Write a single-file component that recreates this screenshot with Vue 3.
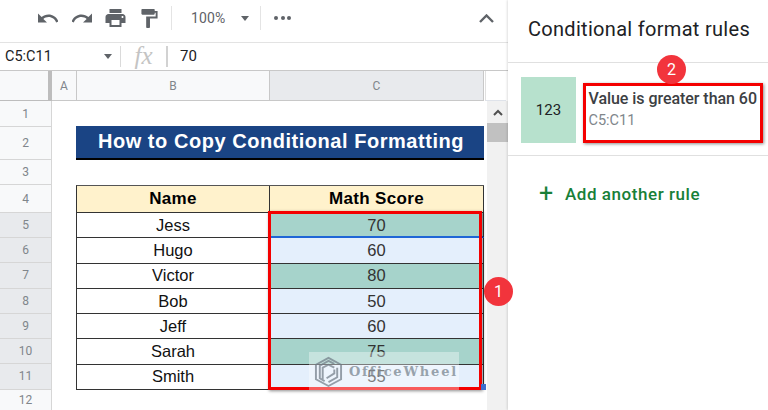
<script setup>
const rowH = [26, 33, 25, 28, 25, 25, 25.5, 25, 25, 25, 26, 21]
const sheetRows = [
  { name: 'Jess', score: 70, pass: true },
  { name: 'Hugo', score: 60, pass: false },
  { name: 'Victor', score: 80, pass: true },
  { name: 'Bob', score: 50, pass: false },
  { name: 'Jeff', score: 60, pass: false },
  { name: 'Sarah', score: 75, pass: true },
  { name: 'Smith', score: 55, pass: false }
]
</script>

<template>
  <div class="app">
    <div class="main">
      <div class="toolbar">
        <svg class="ic undo" viewBox="2 7 20 10"><path d="M12.5 8c-2.65 0-5.05.99-6.9 2.6L2 7v9h9l-3.62-3.62c1.39-1.16 3.16-1.88 5.12-1.88 3.54 0 6.55 2.31 7.6 5.5l2.37-.78C21.08 11.03 17.15 8 12.5 8z"/></svg>
        <svg class="ic redo" viewBox="2 7 20 10"><path d="M18.4 10.6C16.55 8.99 14.15 8 11.5 8c-4.65 0-8.58 3.03-9.96 7.22L3.9 16c1.05-3.19 4.05-5.5 7.6-5.5 1.95 0 3.73.72 5.12 1.88L13 16h9V7l-3.6 3.6z"/></svg>
        <svg class="ic print" viewBox="2 3 20 18"><path d="M19 8H5c-1.66 0-3 1.34-3 3v6h4v4h12v-4h4v-6c0-1.66-1.34-3-3-3zm-3 11H8v-5h8v5zm3-7c-.55 0-1-.45-1-1s.45-1 1-1 1 .45 1 1-.45 1-1 1zm-1-9H6v4h12V3z"/></svg>
        <svg class="ic paint" viewBox="4 2 17 20"><path d="M18 4V3c0-.55-.45-1-1-1H5c-.55 0-1 .45-1 1v4c0 .55.45 1 1 1h12c.55 0 1-.45 1-1V6h1v4H9v11c0 .55.45 1 1 1h2c.55 0 1-.45 1-1v-9h8V4h-3z"/></svg>
        <i class="tsep first"></i>
        <span class="zoom">100%</span>
        <i class="caret zoomcaret"></i>
        <i class="tsep second"></i>
        <span class="dots"><b></b><b></b><b></b></span>
        <svg class="chev" viewBox="0 0 15 9"><path d="M1 8l6.5-6.5L14 8" fill="none" stroke="#5f6368" stroke-width="2.4"/></svg>
      </div>

      <div class="formula">
        <span class="ref">C5:C11</span>
        <i class="caret refcaret"></i>
        <i class="fsep a"></i>
        <span class="fx">fx</span>
        <i class="fsep b"></i>
        <span class="val">70</span>
      </div>

      <div class="cols">
        <div class="corner"></div>
        <div class="col a">A</div>
        <div class="col b">B</div>
        <div class="col c">C</div>
        <div class="col end"></div>
      </div>

      <div class="body">
        <div class="rownums">
          <div
            v-for="(h, i) in rowH"
            :key="i"
            class="rownum"
            :class="{ sel: i >= 4 && i <= 10 }"
            :style="{ height: h + 'px' }"
          >{{ i + 1 }}</div>
        </div>

        <div class="grid">
          <div class="gap1"></div>
          <div class="title">How to Copy Conditional Formatting</div>
          <div class="gap2"></div>
          <div class="table">
            <div class="tr head">
              <div class="td">Name</div>
              <div class="td">Math Score</div>
            </div>
            <div v-for="(r, i) in sheetRows" :key="r.name" class="tr">
              <div class="td">{{ r.name }}</div>
              <div class="td score" :class="[r.pass ? 'pass' : 'fail', { active: i === 0 }]">{{ r.score }}</div>
            </div>
          </div>
        </div>

        <div class="scroll">
          <div class="up">
            <svg viewBox="0 0 10 7" width="10" height="7"><path d="M1 6l4-4 4 4" fill="none" stroke="#505050" stroke-width="2"/></svg>
          </div>
          <div class="thumb"></div>
        </div>
      </div>
    </div>

    <aside class="panel">
      <div class="ptitle">Conditional format rules</div>
      <div class="rule">
        <div class="swatch">123</div>
        <div class="rtext">
          <div class="rname">Value is greater than 60</div>
          <div class="rrange">C5:C11</div>
        </div>
      </div>
      <div class="add"><span class="plus">+</span>Add another rule</div>
    </aside>

    <div class="redbox sel-range"></div>
    <div class="handle"></div>
    <div class="redbox rule-box"></div>
    <div class="badge one">1</div>
    <div class="badge two">2</div>

    <div class="wm">
      <svg class="wmlogo" viewBox="0 0 30 32"><g fill="none" stroke="#6f7a85" stroke-width="2"><path d="M15 2L28 9v15l-13 7L2 24V9z"/><path d="M21 8l-6-3-9 5v13l5 3"/><path d="M9 24V12l6-3 6 3"/><path d="M24 12v10l-9 5"/><path d="M13 23l8-5v-4"/></g></svg>
      <span class="wmtext">OfficeWheel</span>
    </div>
  </div>
</template>

<style>
html, body { margin: 0; padding: 0; background: #fff; }
</style>

<style scoped>
.app {
  position: relative;
  width: 768px;
  height: 410px;
  overflow: hidden;
  display: flex;
  background: #fff;
  font-family: Roboto, "Liberation Sans", sans-serif;
}
.main { width: 508px; flex: none; display: flex; flex-direction: column; }

.toolbar {
  flex: none;
  display: flex;
  align-items: center;
  border-bottom: 1px solid #e3e3e3;
  padding-bottom: 6px;
  box-sizing: content-box;
  height: 36px;
}
.ic { fill: #5f6368; flex: none; display: block; }
.undo { width: 20px; height: 11px; margin-left: 38px; }
.redo { width: 20px; height: 11px; margin-left: 14px; }
.print { width: 21px; height: 18px; margin-left: 13px; }
.paint { width: 17px; height: 19px; margin-left: 15px; }
.tsep { width: 1px; height: 24px; background: #e4e4e4; flex: none; }
.tsep.first { margin-left: 13px; }
.zoom { font-size: 14px; color: #5f6368; margin-left: 19px; width: 36px; letter-spacing: .1px; }
.caret {
  width: 0; height: 0; flex: none;
  border-left: 4px solid transparent;
  border-right: 4px solid transparent;
  border-top: 5px solid #5f6368;
}
.zoomcaret { margin-left: 14px; }
.tsep.second { margin-left: 11px; }
.dots { display: flex; gap: 2.5px; margin-left: 13px; }
.dots b { width: 4px; height: 4px; border-radius: 50%; background: #5f6368; }
.chev { width: 15px; height: 9px; margin-left: 188px; flex: none; }

.formula {
  flex: none;
  display: flex;
  align-items: center;
  border-bottom: 1px solid #c8c8c8;
  font-size: 14.5px;
  color: #202124;
  padding-bottom: 1px;
  box-sizing: content-box;
  height: 26px;
}
.ref { margin-left: 5px; width: 99px; }
.refcaret { margin-right: 8px; }
.fsep { width: 1px; height: 21px; flex: none; background: #dadada; }
.fx { font: italic 25px "Liberation Serif", serif; color: #c4c4c4; width: 45px; text-align: center; }
.fsep.b { width: 2px; background: #d2d2d2; }
.val { margin-left: 12px; font-size: 15px; }

.cols {
  height: 30px;
  flex: none;
  display: flex;
  font-size: 12px;
  color: #80868b;
}
.corner { width: 48px; flex: none; background: #f8f9fa; border-right: 4px solid #bdbdbd; border-bottom: 1px solid #bdbdbd; box-sizing: content-box; height: 29px; }
.col {
  flex: none;
  display: flex;
  align-items: center;
  justify-content: center;
  background: #f8f9fa;
  border-right: 1px solid #c8c8c8;
  border-bottom: 1px solid #c8c8c8;
  box-sizing: border-box;
}
.col.a { width: 25px; }
.col.b { width: 193px; }
.col.c { width: 214px; background: #e8eaed; }
.col.end { border: 0; background: #fff; border-left: 1px solid #e0e0e0; border-bottom: 1px solid #dfe3ea; margin-left: 1px; width: 21px; }

.body { flex: 1; min-height: 0; display: flex; }
.rownums { width: 52px; flex: none; }
.rownum {
  box-sizing: border-box;
  display: flex;
  align-items: center;
  justify-content: center;
  background: #f8f9fa;
  border-right: 1px solid #d6d6d6;
  border-bottom: 1px solid #d6d6d6;
  font-size: 12px;
  color: #80868b;
}
.rownum.sel { background: #e8eaed; }

.grid { width: 435px; flex: none; font-family: "Liberation Sans", Arial, sans-serif; }
.gap1 { height: 25px; margin-left: 24px; }
.title {
  margin-left: 24px;
  width: 408px;
  height: 34px;
  box-sizing: border-box;
  background: #1a4484;
  border-bottom: 2px solid #000;
  color: #fff;
  font-weight: 700;
  font-size: 20px;
  letter-spacing: .54px;
  display: flex;
  align-items: center;
  justify-content: center;
  padding: 0 0 1px 2px;
}
.gap2 { height: 25px; }
.table {
  margin-left: 24px;
  width: 408px;
  border-left: 1px solid #333;
  border-top: 1px solid #555;
  box-sizing: border-box;
}
.tr { display: flex; height: 25.3px; border-bottom: 1px solid #333; box-sizing: border-box; }
.tr.head { height: 27px; background: #fff2cc; }
.td {
  display: flex;
  align-items: center;
  justify-content: center;
  font-size: 16.5px;
  color: #111;
  box-sizing: border-box;
}
.td:first-child { width: 193px; border-right: 1px solid #333; }
.td:last-child { width: 214px; border-right: 1px solid #333; }
.head .td { font-weight: 700; font-size: 17px; letter-spacing: .35px; color: #000; padding-bottom: 1px; }
.pass { background: #a6d3cb; color: #333; }
.fail { background: #e4effc; color: #333; }
.active { box-shadow: 0 1px 0 #1f66d6, inset 0 -1px 0 #1f66d6; }

.scroll { width: 21px; flex: none; background: #f1f1f1; }
.up { height: 22px; display: flex; align-items: center; justify-content: center; }
.thumb { height: 19px; background: #c1c1c1; }

.panel {
  flex: 1;
  position: relative;
  box-shadow: -1px 0 2px rgba(0,0,0,.12);
  background: #fff;
}
.ptitle {
  height: 63px;
  box-sizing: border-box;
  padding: 17px 0 0 20px;
  font-size: 20px;
  font-weight: 400;
  color: #202124;
  letter-spacing: .3px;
  border-bottom: 1px solid #e0e0e0;
}
.rule {
  height: 93px;
  box-sizing: border-box;
  display: flex;
  align-items: flex-start;
  padding: 14px 0 0 13px;
  border-bottom: 1px solid #e0e0e0;
}
.swatch {
  width: 55px;
  height: 66px;
  flex: none;
  background: #b7e1cd;
  color: #202124;
  font-size: 15px;
  display: flex;
  align-items: center;
  justify-content: center;
}
.rtext { margin-left: 12.5px; margin-top: 12px; }
.rname { font-size: 16px; font-weight: 500; color: #3c4043; line-height: 20px; white-space: nowrap; letter-spacing: -.05px; }
.rrange { font-size: 14.5px; color: #80868b; line-height: 20px; margin-top: 2px; }
.add {
  display: flex;
  align-items: center;
  margin: 26px 0 0 31px;
  font-size: 17px;
  font-weight: 500;
  color: #188038;
  letter-spacing: .55px;
}
.plus { font-size: 25px; font-weight: 400; width: 26px; line-height: 24px; letter-spacing: 0; }

.redbox {
  position: absolute;
  box-sizing: border-box;
  border: 3px solid #f40000;
  box-shadow: 1px 1px 3px rgba(0,0,0,.45);
}
.sel-range { left: 268px; top: 211px; width: 214px; height: 179px; }
.rule-box { left: 583px; top: 83px; width: 180px; height: 60px; }
.handle { position: absolute; left: 481px; top: 384px; width: 5px; height: 6px; background: #3d6fd0; }
.badge {
  position: absolute;
  width: 29px;
  height: 29px;
  border-radius: 50%;
  background: #f2343c;
  color: #fff;
  font-size: 16px;
  display: flex;
  align-items: center;
  justify-content: center;
}
.badge.one { left: 484px; top: 277px; }
.badge.two { left: 657px; top: 55px; }

.wm {
  position: absolute;
  left: 309px;
  top: 352px;
  width: 150px;
  height: 38px;
  display: flex;
  align-items: center;
  background: rgba(255,255,255,.36);
}
.wmlogo { width: 29px; height: 33px; margin-left: 5px; flex: none; opacity: .7; }
.wmtext {
  margin-left: 6px;
  font: 700 13px "DejaVu Serif", serif;
  color: #7b8791;
  letter-spacing: 1.8px;
  opacity: .75;
}
</style>
